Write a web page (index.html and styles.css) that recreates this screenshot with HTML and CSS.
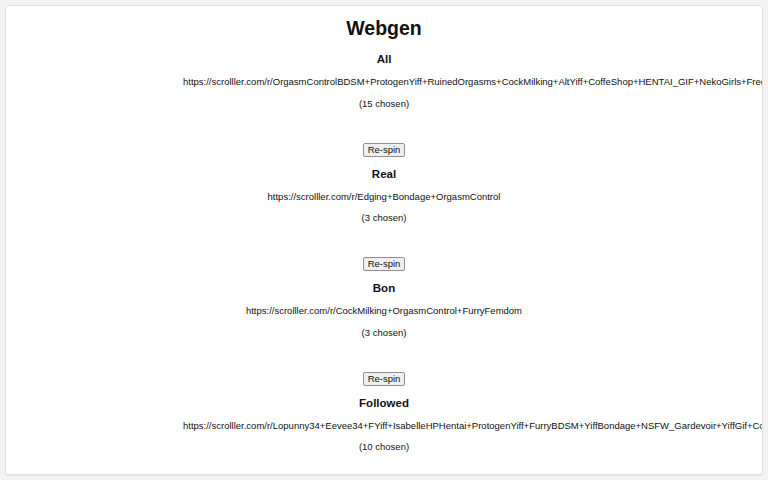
FILE: index.html
```html
<!DOCTYPE html>
<html>
<head>
<meta charset="utf-8">
<link rel="stylesheet" href="styles.css">
</head>
<body>
<div class="card">
  <div class="inner">
    <h1 class="title">Webgen</h1>
    <section class="group">
      <h3 class="group-name">All</h3>
      <p class="url">https://scrolller.com/r/OrgasmControlBDSM+ProtogenYiff+RuinedOrgasms+CockMilking+AltYiff+CoffeShop+HENTAI_GIF+NekoGirls+FreeUse+Edging+Bondage+OrgasmControl+FurryFemdom+Lopunny34+Eevee34</p>
      <p class="count">(15 chosen)</p>
    </section>
    <section class="group">
      <button class="respin">Re-spin</button>
      <h3 class="group-name">Real</h3>
      <p class="url">https://scrolller.com/r/Edging+Bondage+OrgasmControl</p>
      <p class="count">(3 chosen)</p>
    </section>
    <section class="group">
      <button class="respin">Re-spin</button>
      <h3 class="group-name">Bon</h3>
      <p class="url">https://scrolller.com/r/CockMilking+OrgasmControl+FurryFemdom</p>
      <p class="count">(3 chosen)</p>
    </section>
    <section class="group">
      <button class="respin">Re-spin</button>
      <h3 class="group-name">Followed</h3>
      <p class="url">https://scrolller.com/r/Lopunny34+Eevee34+FYiff+IsabelleHPHentai+ProtogenYiff+FurryBDSM+YiffBondage+NSFW_Gardevoir+YiffGif+CoffeShop</p>
      <p class="count">(10 chosen)</p>
    </section>
  </div>
</div>
</body>
</html>
```

FILE: styles.css
```css
html, body {
  margin: 0;
  padding: 0;
}
body {
  background: #f3f3f3;
  font-family: "Liberation Sans", Arial, sans-serif;
  color: #111;
  padding: 5px;
  height: 480px;
  box-sizing: border-box;
}
.card {
  background: #fff;
  border: 1px solid #e0e0e0;
  border-radius: 3px;
  box-shadow: 0 1px 2px rgba(0,0,0,0.06);
  height: 470px;
  box-sizing: border-box;
  overflow: hidden;
  padding-top: 10px;
}
.inner {
  width: 402px;
  margin: 0 auto;
  text-align: center;
}
.title {
  font-size: 19.5px;
  font-weight: bold;
  line-height: 24px;
  margin: 0;
}
.group-name {
  font-size: 11.5px;
  font-weight: bold;
  line-height: 16px;
  margin: 0;
}
.group:first-of-type .group-name {
  margin-top: 11px;
}
.url, .count {
  font-size: 9.5px;
  line-height: 14px;
  margin: 8px 0 0;
  white-space: nowrap;
}
.count {
  margin-top: 7.5px;
}
.respin {
  display: block;
  margin: 32px auto 9px;
  font-family: "Liberation Sans", Arial, sans-serif;
  font-size: 9.5px;
  line-height: 10px;
  height: 14px;
  padding: 1px 4px;
  border: 1px solid #8f8f8f;
  border-radius: 2px;
  background: #efefef;
  color: #111;
}
```
